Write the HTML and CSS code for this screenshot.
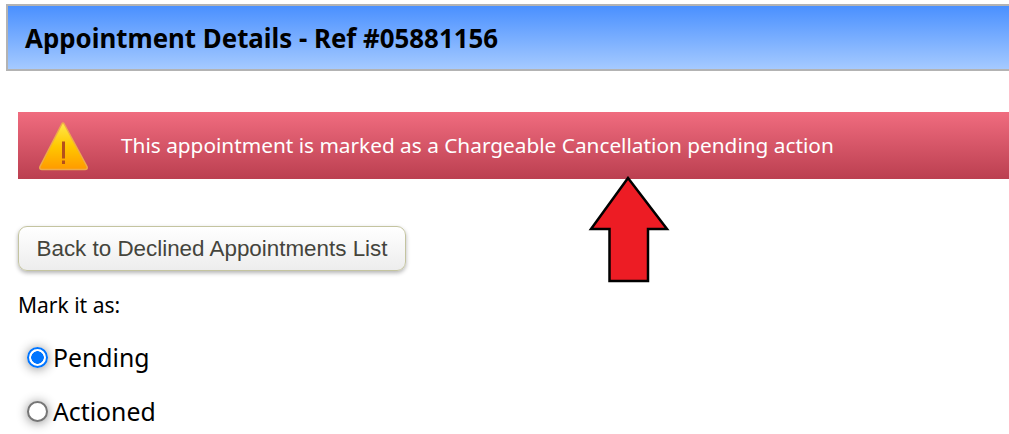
FILE: index.html
```html
<!DOCTYPE html>
<html lang="en">
<head>
  <meta charset="UTF-8">
  <title>Appointment Details</title>
  <link rel="stylesheet" href="styles.css">
</head>
<body>
  <div class="page">
    <div class="header">
      <h1>Appointment Details - Ref #05881156</h1>
    </div>
    <div class="content">
      <div class="alert">
        <svg class="alert-icon" width="54" height="54" viewBox="0 0 54 54">
          <defs>
            <linearGradient id="warn" x1="0" y1="0" x2="0" y2="1">
              <stop offset="0" stop-color="#ffe84a"/>
              <stop offset="0.5" stop-color="#ffc800"/>
              <stop offset="1" stop-color="#ff9a00"/>
            </linearGradient>
          </defs>
          <path d="M25.800 5 Q27 3 28.200 5 L51 47.500 Q52 50.500 49 50.500 L6 50.500 Q3 50.500 4 47.500 Z" fill="url(#warn)" stroke="#eeaa4a" stroke-width="1.500" stroke-linejoin="round"/>
          <rect x="26" y="22.500" width="3" height="17" fill="#b4501c"/>
          <rect x="26" y="41.500" width="3" height="3.500" fill="#b4501c"/>
        </svg>
        <span class="alert-text">This appointment is marked as a Chargeable Cancellation pending action</span>
      </div>
      <button class="btn-back">Back to Declined Appointments List</button>
      <p class="mark-label">Mark it as:</p>
      <label class="radio-row"><input type="radio" name="status" checked>Pending</label>
      <label class="radio-row"><input type="radio" name="status">Actioned</label>
    </div>
    <svg class="arrow" width="84" height="108" viewBox="0 0 84 108">
      <path d="M40 2 L3 53 L21.500 53 L21.500 105 L60 105 L60 53 L79 53 Z" fill="#ed1c24" stroke="#000" stroke-width="2.500"/>
    </svg>
  </div>
</body>
</html>
```

FILE: styles.css
```css
* {
  margin: 0;
  padding: 0;
  box-sizing: border-box;
}

html, body {
  height: 100%;
  overflow: hidden;
  background-color: #fff;
}

body {
  font-family: 'Noto Sans', sans-serif;
  color: #000;
}

.page {
  position: relative;
  height: 100%;
  padding-top: 4px;
}

.header {
  height: 67px;
  margin-left: 6px;
  margin-right: -10px;
  padding: 2px 0 0 17px;
  display: flex;
  align-items: center;
  border: 2px solid #b3b3b3;
  background: linear-gradient(#4a90ff, #a5caff);
}

h1 {
  font-size: 25.850px;
  font-weight: 700;
  line-height: 1;
}

.content {
  padding: 41px 0 0 18px;
}

.alert {
  height: 67px;
  margin-right: -10px;
  padding-left: 18px;
  display: flex;
  align-items: center;
  gap: 31px;
  background: linear-gradient(#f06c7f, #bb3f50);
}

.alert-icon {
  flex: none;
}

.alert-text {
  padding-bottom: 2px;
  color: #fff;
  font-size: 20.800px;
}

.btn-back {
  display: block;
  width: 388px;
  height: 45px;
  margin-top: 47px;
  border: 1px solid #c4c4a0;
  border-radius: 9px;
  background: linear-gradient(#fff, #ededed);
  box-shadow: 0 2px 4px rgba(0, 0, 0, 0.3);
  color: #44443c;
  font-family: 'Liberation Sans', Arial, sans-serif;
  font-size: 22.400px;
}

.mark-label {
  margin-top: 20px;
  font-size: 21px;
  line-height: 28px;
}

.radio-row {
  display: flex;
  align-items: center;
  margin-left: 8.500px;
  margin-top: 22px;
  height: 32px;
  font-size: 24.800px;
  line-height: 32px;
}

.radio-row input {
  appearance: none;
  flex: none;
  width: 21px;
  height: 21px;
  margin-right: 5.500px;
  border: 2px solid #767676;
  border-radius: 50%;
  background-color: #fff;
  box-shadow: 0 1px 11px rgba(0, 0, 0, 0.45);
}

.radio-row input:checked {
  border-color: #0075ff;
  background: radial-gradient(circle, #0075ff 0, #0075ff 6px, #fff 6.500px);
}

.arrow {
  position: absolute;
  left: 588px;
  top: 176px;
}
```
